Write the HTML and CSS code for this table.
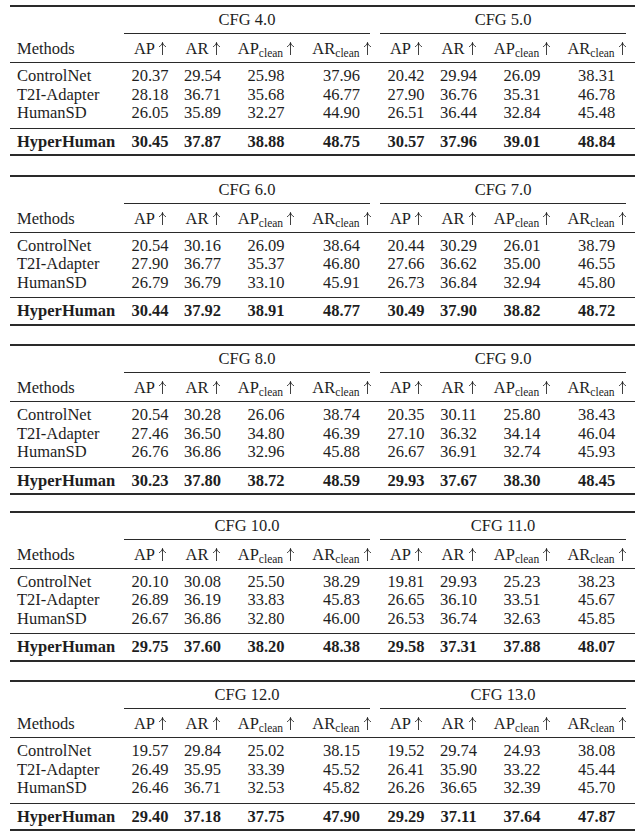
FILE: index.html
```html
<!DOCTYPE html>
<html>
<head>
<meta charset="utf-8">
<link rel="stylesheet" href="styles.css">
</head>
<body>
<main class="page">

<table class="res">
<colgroup><col class="c-m"><col class="c-ap"><col class="c-ar"><col class="c-apc"><col class="c-arc1"><col class="c-ap"><col class="c-ar"><col class="c-apc"><col class="c-arc2"></colgroup>
<thead>
<tr class="grp"><th></th><th colspan="4"><div class="cmid cmid-l">CFG 4.0</div></th><th colspan="4"><div class="cmid cmid-r">CFG 5.0</div></th></tr>
<tr class="hdr"><th class="m">Methods</th><th>AP&nbsp;<svg class="up" viewBox="0 0 7 13"><path d="M3.5 13V0.8M0.4 4.6C2 3.6 3 2.4 3.5 0.6C4 2.4 5 3.6 6.6 4.6"/></svg></th><th>AR&nbsp;<svg class="up" viewBox="0 0 7 13"><path d="M3.5 13V0.8M0.4 4.6C2 3.6 3 2.4 3.5 0.6C4 2.4 5 3.6 6.6 4.6"/></svg></th><th>AP<span class="sub">clean</span>&nbsp;<svg class="up" viewBox="0 0 7 13"><path d="M3.5 13V0.8M0.4 4.6C2 3.6 3 2.4 3.5 0.6C4 2.4 5 3.6 6.6 4.6"/></svg></th><th>AR<span class="sub">clean</span>&nbsp;<svg class="up" viewBox="0 0 7 13"><path d="M3.5 13V0.8M0.4 4.6C2 3.6 3 2.4 3.5 0.6C4 2.4 5 3.6 6.6 4.6"/></svg></th><th>AP&nbsp;<svg class="up" viewBox="0 0 7 13"><path d="M3.5 13V0.8M0.4 4.6C2 3.6 3 2.4 3.5 0.6C4 2.4 5 3.6 6.6 4.6"/></svg></th><th>AR&nbsp;<svg class="up" viewBox="0 0 7 13"><path d="M3.5 13V0.8M0.4 4.6C2 3.6 3 2.4 3.5 0.6C4 2.4 5 3.6 6.6 4.6"/></svg></th><th>AP<span class="sub">clean</span>&nbsp;<svg class="up" viewBox="0 0 7 13"><path d="M3.5 13V0.8M0.4 4.6C2 3.6 3 2.4 3.5 0.6C4 2.4 5 3.6 6.6 4.6"/></svg></th><th>AR<span class="sub">clean</span>&nbsp;<svg class="up" viewBox="0 0 7 13"><path d="M3.5 13V0.8M0.4 4.6C2 3.6 3 2.4 3.5 0.6C4 2.4 5 3.6 6.6 4.6"/></svg></th></tr>
</thead>
<tbody class="base">
<tr><td class="m">ControlNet</td><td>20.37</td><td>29.54</td><td>25.98</td><td>37.96</td><td>20.42</td><td>29.94</td><td>26.09</td><td>38.31</td></tr>
<tr><td class="m">T2I-Adapter</td><td>28.18</td><td>36.71</td><td>35.68</td><td>46.77</td><td>27.90</td><td>36.76</td><td>35.31</td><td>46.78</td></tr>
<tr><td class="m">HumanSD</td><td>26.05</td><td>35.89</td><td>32.27</td><td>44.90</td><td>26.51</td><td>36.44</td><td>32.84</td><td>45.48</td></tr>
</tbody>
<tbody class="ours">
<tr><td class="m">HyperHuman</td><td>30.45</td><td>37.87</td><td>38.88</td><td>48.75</td><td>30.57</td><td>37.96</td><td>39.01</td><td>48.84</td></tr>
</tbody>
</table>

<table class="res">
<colgroup><col class="c-m"><col class="c-ap"><col class="c-ar"><col class="c-apc"><col class="c-arc1"><col class="c-ap"><col class="c-ar"><col class="c-apc"><col class="c-arc2"></colgroup>
<thead>
<tr class="grp"><th></th><th colspan="4"><div class="cmid cmid-l">CFG 6.0</div></th><th colspan="4"><div class="cmid cmid-r">CFG 7.0</div></th></tr>
<tr class="hdr"><th class="m">Methods</th><th>AP&nbsp;<svg class="up" viewBox="0 0 7 13"><path d="M3.5 13V0.8M0.4 4.6C2 3.6 3 2.4 3.5 0.6C4 2.4 5 3.6 6.6 4.6"/></svg></th><th>AR&nbsp;<svg class="up" viewBox="0 0 7 13"><path d="M3.5 13V0.8M0.4 4.6C2 3.6 3 2.4 3.5 0.6C4 2.4 5 3.6 6.6 4.6"/></svg></th><th>AP<span class="sub">clean</span>&nbsp;<svg class="up" viewBox="0 0 7 13"><path d="M3.5 13V0.8M0.4 4.6C2 3.6 3 2.4 3.5 0.6C4 2.4 5 3.6 6.6 4.6"/></svg></th><th>AR<span class="sub">clean</span>&nbsp;<svg class="up" viewBox="0 0 7 13"><path d="M3.5 13V0.8M0.4 4.6C2 3.6 3 2.4 3.5 0.6C4 2.4 5 3.6 6.6 4.6"/></svg></th><th>AP&nbsp;<svg class="up" viewBox="0 0 7 13"><path d="M3.5 13V0.8M0.4 4.6C2 3.6 3 2.4 3.5 0.6C4 2.4 5 3.6 6.6 4.6"/></svg></th><th>AR&nbsp;<svg class="up" viewBox="0 0 7 13"><path d="M3.5 13V0.8M0.4 4.6C2 3.6 3 2.4 3.5 0.6C4 2.4 5 3.6 6.6 4.6"/></svg></th><th>AP<span class="sub">clean</span>&nbsp;<svg class="up" viewBox="0 0 7 13"><path d="M3.5 13V0.8M0.4 4.6C2 3.6 3 2.4 3.5 0.6C4 2.4 5 3.6 6.6 4.6"/></svg></th><th>AR<span class="sub">clean</span>&nbsp;<svg class="up" viewBox="0 0 7 13"><path d="M3.5 13V0.8M0.4 4.6C2 3.6 3 2.4 3.5 0.6C4 2.4 5 3.6 6.6 4.6"/></svg></th></tr>
</thead>
<tbody class="base">
<tr><td class="m">ControlNet</td><td>20.54</td><td>30.16</td><td>26.09</td><td>38.64</td><td>20.44</td><td>30.29</td><td>26.01</td><td>38.79</td></tr>
<tr><td class="m">T2I-Adapter</td><td>27.90</td><td>36.77</td><td>35.37</td><td>46.80</td><td>27.66</td><td>36.62</td><td>35.00</td><td>46.55</td></tr>
<tr><td class="m">HumanSD</td><td>26.79</td><td>36.79</td><td>33.10</td><td>45.91</td><td>26.73</td><td>36.84</td><td>32.94</td><td>45.80</td></tr>
</tbody>
<tbody class="ours">
<tr><td class="m">HyperHuman</td><td>30.44</td><td>37.92</td><td>38.91</td><td>48.77</td><td>30.49</td><td>37.90</td><td>38.82</td><td>48.72</td></tr>
</tbody>
</table>

<table class="res">
<colgroup><col class="c-m"><col class="c-ap"><col class="c-ar"><col class="c-apc"><col class="c-arc1"><col class="c-ap"><col class="c-ar"><col class="c-apc"><col class="c-arc2"></colgroup>
<thead>
<tr class="grp"><th></th><th colspan="4"><div class="cmid cmid-l">CFG 8.0</div></th><th colspan="4"><div class="cmid cmid-r">CFG 9.0</div></th></tr>
<tr class="hdr"><th class="m">Methods</th><th>AP&nbsp;<svg class="up" viewBox="0 0 7 13"><path d="M3.5 13V0.8M0.4 4.6C2 3.6 3 2.4 3.5 0.6C4 2.4 5 3.6 6.6 4.6"/></svg></th><th>AR&nbsp;<svg class="up" viewBox="0 0 7 13"><path d="M3.5 13V0.8M0.4 4.6C2 3.6 3 2.4 3.5 0.6C4 2.4 5 3.6 6.6 4.6"/></svg></th><th>AP<span class="sub">clean</span>&nbsp;<svg class="up" viewBox="0 0 7 13"><path d="M3.5 13V0.8M0.4 4.6C2 3.6 3 2.4 3.5 0.6C4 2.4 5 3.6 6.6 4.6"/></svg></th><th>AR<span class="sub">clean</span>&nbsp;<svg class="up" viewBox="0 0 7 13"><path d="M3.5 13V0.8M0.4 4.6C2 3.6 3 2.4 3.5 0.6C4 2.4 5 3.6 6.6 4.6"/></svg></th><th>AP&nbsp;<svg class="up" viewBox="0 0 7 13"><path d="M3.5 13V0.8M0.4 4.6C2 3.6 3 2.4 3.5 0.6C4 2.4 5 3.6 6.6 4.6"/></svg></th><th>AR&nbsp;<svg class="up" viewBox="0 0 7 13"><path d="M3.5 13V0.8M0.4 4.6C2 3.6 3 2.4 3.5 0.6C4 2.4 5 3.6 6.6 4.6"/></svg></th><th>AP<span class="sub">clean</span>&nbsp;<svg class="up" viewBox="0 0 7 13"><path d="M3.5 13V0.8M0.4 4.6C2 3.6 3 2.4 3.5 0.6C4 2.4 5 3.6 6.6 4.6"/></svg></th><th>AR<span class="sub">clean</span>&nbsp;<svg class="up" viewBox="0 0 7 13"><path d="M3.5 13V0.8M0.4 4.6C2 3.6 3 2.4 3.5 0.6C4 2.4 5 3.6 6.6 4.6"/></svg></th></tr>
</thead>
<tbody class="base">
<tr><td class="m">ControlNet</td><td>20.54</td><td>30.28</td><td>26.06</td><td>38.74</td><td>20.35</td><td>30.11</td><td>25.80</td><td>38.43</td></tr>
<tr><td class="m">T2I-Adapter</td><td>27.46</td><td>36.50</td><td>34.80</td><td>46.39</td><td>27.10</td><td>36.32</td><td>34.14</td><td>46.04</td></tr>
<tr><td class="m">HumanSD</td><td>26.76</td><td>36.86</td><td>32.96</td><td>45.88</td><td>26.67</td><td>36.91</td><td>32.74</td><td>45.93</td></tr>
</tbody>
<tbody class="ours">
<tr><td class="m">HyperHuman</td><td>30.23</td><td>37.80</td><td>38.72</td><td>48.59</td><td>29.93</td><td>37.67</td><td>38.30</td><td>48.45</td></tr>
</tbody>
</table>

<table class="res">
<colgroup><col class="c-m"><col class="c-ap"><col class="c-ar"><col class="c-apc"><col class="c-arc1"><col class="c-ap"><col class="c-ar"><col class="c-apc"><col class="c-arc2"></colgroup>
<thead>
<tr class="grp"><th></th><th colspan="4"><div class="cmid cmid-l">CFG 10.0</div></th><th colspan="4"><div class="cmid cmid-r">CFG 11.0</div></th></tr>
<tr class="hdr"><th class="m">Methods</th><th>AP&nbsp;<svg class="up" viewBox="0 0 7 13"><path d="M3.5 13V0.8M0.4 4.6C2 3.6 3 2.4 3.5 0.6C4 2.4 5 3.6 6.6 4.6"/></svg></th><th>AR&nbsp;<svg class="up" viewBox="0 0 7 13"><path d="M3.5 13V0.8M0.4 4.6C2 3.6 3 2.4 3.5 0.6C4 2.4 5 3.6 6.6 4.6"/></svg></th><th>AP<span class="sub">clean</span>&nbsp;<svg class="up" viewBox="0 0 7 13"><path d="M3.5 13V0.8M0.4 4.6C2 3.6 3 2.4 3.5 0.6C4 2.4 5 3.6 6.6 4.6"/></svg></th><th>AR<span class="sub">clean</span>&nbsp;<svg class="up" viewBox="0 0 7 13"><path d="M3.5 13V0.8M0.4 4.6C2 3.6 3 2.4 3.5 0.6C4 2.4 5 3.6 6.6 4.6"/></svg></th><th>AP&nbsp;<svg class="up" viewBox="0 0 7 13"><path d="M3.5 13V0.8M0.4 4.6C2 3.6 3 2.4 3.5 0.6C4 2.4 5 3.6 6.6 4.6"/></svg></th><th>AR&nbsp;<svg class="up" viewBox="0 0 7 13"><path d="M3.5 13V0.8M0.4 4.6C2 3.6 3 2.4 3.5 0.6C4 2.4 5 3.6 6.6 4.6"/></svg></th><th>AP<span class="sub">clean</span>&nbsp;<svg class="up" viewBox="0 0 7 13"><path d="M3.5 13V0.8M0.4 4.6C2 3.6 3 2.4 3.5 0.6C4 2.4 5 3.6 6.6 4.6"/></svg></th><th>AR<span class="sub">clean</span>&nbsp;<svg class="up" viewBox="0 0 7 13"><path d="M3.5 13V0.8M0.4 4.6C2 3.6 3 2.4 3.5 0.6C4 2.4 5 3.6 6.6 4.6"/></svg></th></tr>
</thead>
<tbody class="base">
<tr><td class="m">ControlNet</td><td>20.10</td><td>30.08</td><td>25.50</td><td>38.29</td><td>19.81</td><td>29.93</td><td>25.23</td><td>38.23</td></tr>
<tr><td class="m">T2I-Adapter</td><td>26.89</td><td>36.19</td><td>33.83</td><td>45.83</td><td>26.65</td><td>36.10</td><td>33.51</td><td>45.67</td></tr>
<tr><td class="m">HumanSD</td><td>26.67</td><td>36.86</td><td>32.80</td><td>46.00</td><td>26.53</td><td>36.74</td><td>32.63</td><td>45.85</td></tr>
</tbody>
<tbody class="ours">
<tr><td class="m">HyperHuman</td><td>29.75</td><td>37.60</td><td>38.20</td><td>48.38</td><td>29.58</td><td>37.31</td><td>37.88</td><td>48.07</td></tr>
</tbody>
</table>

<table class="res">
<colgroup><col class="c-m"><col class="c-ap"><col class="c-ar"><col class="c-apc"><col class="c-arc1"><col class="c-ap"><col class="c-ar"><col class="c-apc"><col class="c-arc2"></colgroup>
<thead>
<tr class="grp"><th></th><th colspan="4"><div class="cmid cmid-l">CFG 12.0</div></th><th colspan="4"><div class="cmid cmid-r">CFG 13.0</div></th></tr>
<tr class="hdr"><th class="m">Methods</th><th>AP&nbsp;<svg class="up" viewBox="0 0 7 13"><path d="M3.5 13V0.8M0.4 4.6C2 3.6 3 2.4 3.5 0.6C4 2.4 5 3.6 6.6 4.6"/></svg></th><th>AR&nbsp;<svg class="up" viewBox="0 0 7 13"><path d="M3.5 13V0.8M0.4 4.6C2 3.6 3 2.4 3.5 0.6C4 2.4 5 3.6 6.6 4.6"/></svg></th><th>AP<span class="sub">clean</span>&nbsp;<svg class="up" viewBox="0 0 7 13"><path d="M3.5 13V0.8M0.4 4.6C2 3.6 3 2.4 3.5 0.6C4 2.4 5 3.6 6.6 4.6"/></svg></th><th>AR<span class="sub">clean</span>&nbsp;<svg class="up" viewBox="0 0 7 13"><path d="M3.5 13V0.8M0.4 4.6C2 3.6 3 2.4 3.5 0.6C4 2.4 5 3.6 6.6 4.6"/></svg></th><th>AP&nbsp;<svg class="up" viewBox="0 0 7 13"><path d="M3.5 13V0.8M0.4 4.6C2 3.6 3 2.4 3.5 0.6C4 2.4 5 3.6 6.6 4.6"/></svg></th><th>AR&nbsp;<svg class="up" viewBox="0 0 7 13"><path d="M3.5 13V0.8M0.4 4.6C2 3.6 3 2.4 3.5 0.6C4 2.4 5 3.6 6.6 4.6"/></svg></th><th>AP<span class="sub">clean</span>&nbsp;<svg class="up" viewBox="0 0 7 13"><path d="M3.5 13V0.8M0.4 4.6C2 3.6 3 2.4 3.5 0.6C4 2.4 5 3.6 6.6 4.6"/></svg></th><th>AR<span class="sub">clean</span>&nbsp;<svg class="up" viewBox="0 0 7 13"><path d="M3.5 13V0.8M0.4 4.6C2 3.6 3 2.4 3.5 0.6C4 2.4 5 3.6 6.6 4.6"/></svg></th></tr>
</thead>
<tbody class="base">
<tr><td class="m">ControlNet</td><td>19.57</td><td>29.84</td><td>25.02</td><td>38.15</td><td>19.52</td><td>29.74</td><td>24.93</td><td>38.08</td></tr>
<tr><td class="m">T2I-Adapter</td><td>26.49</td><td>35.95</td><td>33.39</td><td>45.52</td><td>26.41</td><td>35.90</td><td>33.22</td><td>45.44</td></tr>
<tr><td class="m">HumanSD</td><td>26.46</td><td>36.71</td><td>32.53</td><td>45.82</td><td>26.26</td><td>36.65</td><td>32.39</td><td>45.70</td></tr>
</tbody>
<tbody class="ours">
<tr><td class="m">HyperHuman</td><td>29.40</td><td>37.18</td><td>37.75</td><td>47.90</td><td>29.29</td><td>37.11</td><td>37.64</td><td>47.87</td></tr>
</tbody>
</table>

</main>
</body>
</html>
```

FILE: styles.css
```css
html, body {
  margin: 0;
  padding: 0;
  background: #ffffff;
}

.page {
  display: flex;
  flex-direction: column;
  gap: 18.5px;
  padding: 5px 0 0 10px;
  font-family: "Liberation Serif", "Times New Roman", serif;
  font-size: 16.5px;
  line-height: 18.5px;
  color: #1e1e1e;
}

.res {
  width: 625px;
  table-layout: fixed;
  border-collapse: separate;
  border-spacing: 0;
  font-family: "Liberation Serif", "Times New Roman", serif;
}

.res:nth-child(4) {
  margin-top: -3px;
}

.c-m { width: 115px; }
.c-ap { width: 50px; }
.c-ar { width: 55px; }
.c-apc { width: 72px; }
.c-arc1 { width: 79px; }
.c-arc2 { width: 77px; }

.res th,
.res td {
  padding: 0;
  text-align: center;
  font-weight: normal;
  white-space: nowrap;
}

.res .m {
  text-align: left;
  padding-left: 7px;
}

/* group row: top rule + cmidrules */
.grp th {
  border-top: 2px solid #2a2a2a;
}

.grp th:first-child {
  padding: 4px 0 3.5px;
}

.cmid {
  padding: 4px 0 3.5px;
  border-bottom: 1px solid #2a2a2a;
}

.cmid-l {
  margin: 0 11px 0 -1px;
}

.cmid-r {
  margin: 0 9px 0 -1px;
}

.hdr th {
  padding-top: 6px;
  padding-bottom: 3.5px;
  border-bottom: 1px solid #2a2a2a;
}

.hdr th.m {
  padding-left: 7px;
}

.sub {
  font-size: 11.5px;
  line-height: 0;
  vertical-align: -3px;
}

.up {
  width: 7px;
  height: 13px;
  vertical-align: -1px;
  fill: none;
  stroke: #1e1e1e;
  stroke-width: 0.85;
  stroke-linecap: round;
}

.base tr:first-child td {
  padding-top: 4px;
}

.base tr:last-child td {
  padding-bottom: 5px;
  border-bottom: 1px solid #2a2a2a;
}

.ours td {
  font-weight: bold;
  padding-top: 4px;
  padding-bottom: 3px;
  border-bottom: 2px solid #2a2a2a;
}

.ours td.m {
  padding-left: 7px;
}
```
